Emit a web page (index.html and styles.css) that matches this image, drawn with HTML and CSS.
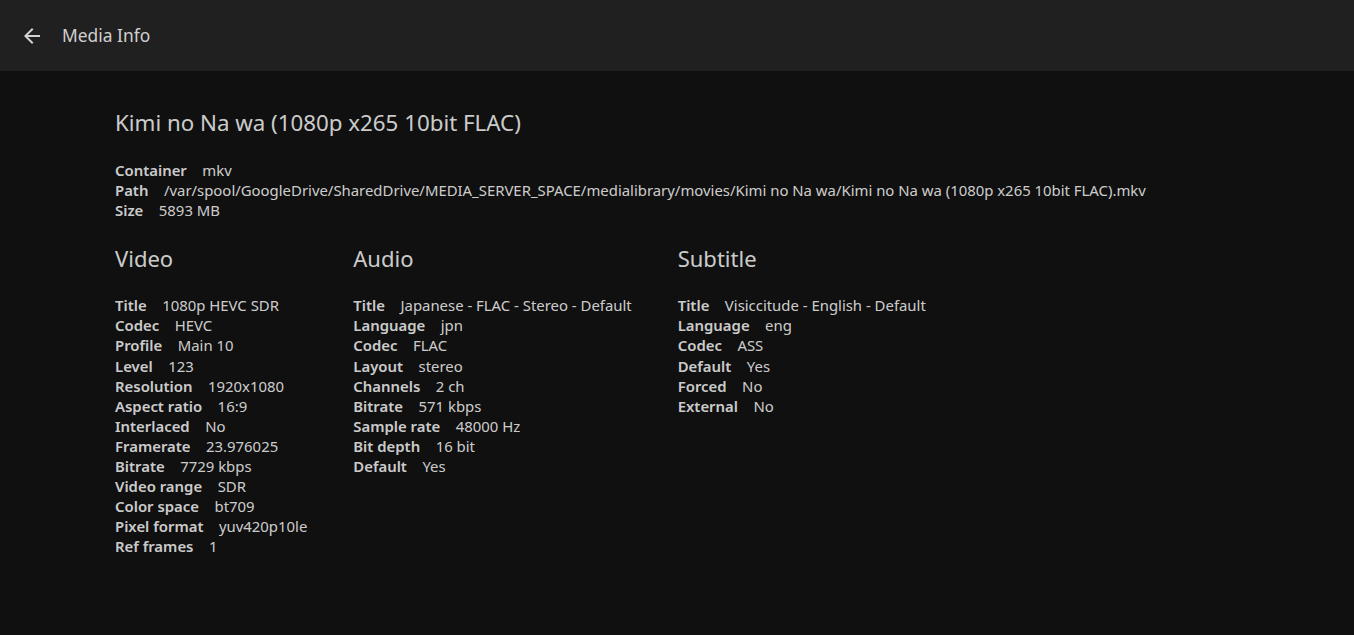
FILE: index.html
```html
<!DOCTYPE html>
<html lang="en">
<head>
    <meta charset="UTF-8">
    <title>Media Info</title>
    <link rel="stylesheet" href="styles.css">
</head>
<body>
    <!-- 顶栏 -->
    <div class="header">
        <button class="back-button" aria-label="Back">
            <svg width="24" height="24" viewBox="0 0 24 24"><path d="M20 11H7.83l5.59-5.59L12 4l-8 8 8 8 1.41-1.41L7.83 13H20v-2z" fill="currentColor"/></svg>
        </button>
        <span class="page-title">Media Info</span>
    </div>

    <!-- 主内容 -->
    <div class="content">
        <h1 class="media-title">Kimi no Na wa (1080p x265 10bit FLAC)</h1>

        <div class="info-block">
            <div class="info-row"><span class="label">Container</span><span>mkv</span></div>
            <div class="info-row"><span class="label">Path</span><span>/var/spool/GoogleDrive/SharedDrive/MEDIA_SERVER_SPACE/medialibrary/movies/Kimi no Na wa/Kimi no Na wa (1080p x265 10bit FLAC).mkv</span></div>
            <div class="info-row"><span class="label">Size</span><span>5893 MB</span></div>
        </div>

        <div class="streams">
            <div class="stream">
                <h2>Video</h2>
                <div class="info-row"><span class="label">Title</span><span>1080p HEVC SDR</span></div>
                <div class="info-row"><span class="label">Codec</span><span>HEVC</span></div>
                <div class="info-row"><span class="label">Profile</span><span>Main 10</span></div>
                <div class="info-row"><span class="label">Level</span><span>123</span></div>
                <div class="info-row"><span class="label">Resolution</span><span>1920x1080</span></div>
                <div class="info-row"><span class="label">Aspect ratio</span><span>16:9</span></div>
                <div class="info-row"><span class="label">Interlaced</span><span>No</span></div>
                <div class="info-row"><span class="label">Framerate</span><span>23.976025</span></div>
                <div class="info-row"><span class="label">Bitrate</span><span>7729 kbps</span></div>
                <div class="info-row"><span class="label">Video range</span><span>SDR</span></div>
                <div class="info-row"><span class="label">Color space</span><span>bt709</span></div>
                <div class="info-row"><span class="label">Pixel format</span><span>yuv420p10le</span></div>
                <div class="info-row"><span class="label">Ref frames</span><span>1</span></div>
            </div>
            <div class="stream">
                <h2>Audio</h2>
                <div class="info-row"><span class="label">Title</span><span>Japanese - FLAC - Stereo - Default</span></div>
                <div class="info-row"><span class="label">Language</span><span>jpn</span></div>
                <div class="info-row"><span class="label">Codec</span><span>FLAC</span></div>
                <div class="info-row"><span class="label">Layout</span><span>stereo</span></div>
                <div class="info-row"><span class="label">Channels</span><span>2 ch</span></div>
                <div class="info-row"><span class="label">Bitrate</span><span>571 kbps</span></div>
                <div class="info-row"><span class="label">Sample rate</span><span>48000 Hz</span></div>
                <div class="info-row"><span class="label">Bit depth</span><span>16 bit</span></div>
                <div class="info-row"><span class="label">Default</span><span>Yes</span></div>
            </div>
            <div class="stream">
                <h2>Subtitle</h2>
                <div class="info-row"><span class="label">Title</span><span>Visiccitude - English - Default</span></div>
                <div class="info-row"><span class="label">Language</span><span>eng</span></div>
                <div class="info-row"><span class="label">Codec</span><span>ASS</span></div>
                <div class="info-row"><span class="label">Default</span><span>Yes</span></div>
                <div class="info-row"><span class="label">Forced</span><span>No</span></div>
                <div class="info-row"><span class="label">External</span><span>No</span></div>
            </div>
        </div>
    </div>
</body>
</html>
```

FILE: styles.css
```css
/* 全局 */
body, html {
    margin: 0;
    padding: 0;
    height: 100%;
    overflow: hidden;
    font-family: 'Noto Sans', sans-serif;
    background: #101010;
    color: rgba(255, 255, 255, 0.8);
}

/* 顶栏 */
.header {
    height: 71px;
    background: #202020;
    display: flex;
    align-items: center;
    padding-left: 20px;
}

.back-button {
    background: none;
    border: none;
    padding: 0;
    color: rgba(255, 255, 255, 0.8);
    display: flex;
    cursor: pointer;
}

.page-title {
    font-size: 17.4px;
    margin-left: 18px;
    margin-bottom: 1px;
}

/* 主内容 */
.content {
    padding: 36px 115px 0;
}

.media-title {
    font-size: 22.3px;
    font-weight: 400;
    margin: 0 0 22px;
}

.info-block {
    margin-bottom: 23px;
}

.info-row {
    font-size: 14.9px;
    line-height: 20.1px;
    white-space: nowrap;
}

.label {
    font-weight: 600;
    margin-right: 15.5px;
}

/* 三栏 */
.streams {
    display: flex;
    gap: 46px;
}

.stream h2 {
    font-size: 22px;
    font-weight: 400;
    margin: 0 0 22px;
}
```
